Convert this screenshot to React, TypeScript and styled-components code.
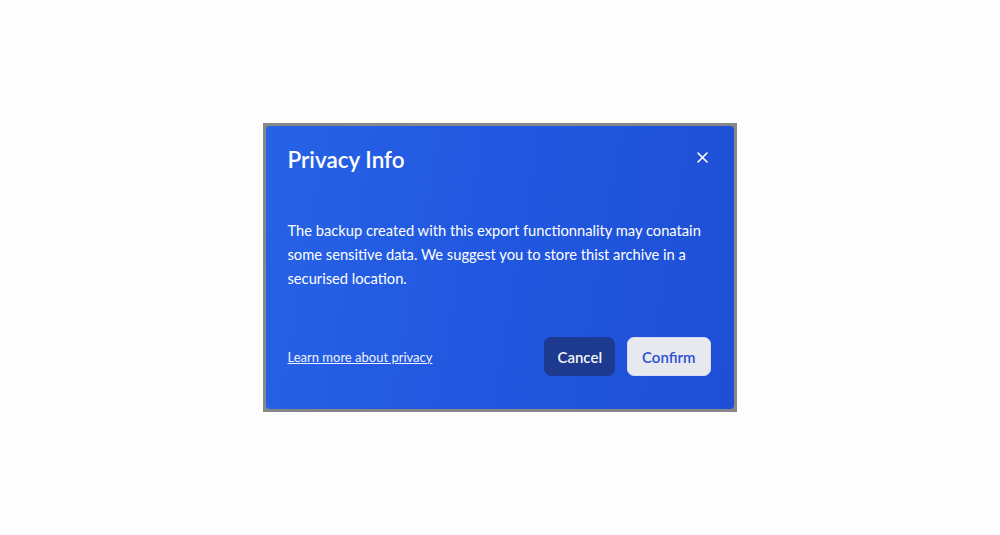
import * as React from "react";
import styled, { createGlobalStyle } from "styled-components";

const GlobalStyle = createGlobalStyle`
  html, body {
    margin: 0;
    padding: 0;
    background: #fdfdfd;
    font-family: Lato, "Noto Sans", "Liberation Sans", sans-serif;
  }
`;

const Page = styled.div`
  width: 1000px;
  height: 535px;
  display: flex;
  align-items: center;
  justify-content: center;
`;

const Frame = styled.div`
  background: #878787;
  padding: 3px;
  margin-left: -1px;
`;

const Card = styled.div`
  width: 468px;
  height: 283px;
  box-sizing: border-box;
  border-radius: 4px;
  background: linear-gradient(100deg, #2662e6 0%, #2157df 50%, #1e4fd6 100%);
  color: #fff;
  display: flex;
  flex-direction: column;
  padding: 19px 23px 33px 22px;
`;

const Header = styled.div`
  display: flex;
  align-items: center;
  justify-content: space-between;
  height: 28px;
`;

const Title = styled.h2`
  margin: 0;
  font-size: 22.5px;
  font-weight: 600;
`;

const CloseButton = styled.button`
  background: none;
  border: none;
  padding: 0;
  width: 16px;
  height: 16px;
  display: flex;
  align-items: center;
  justify-content: center;
  cursor: pointer;
  margin-top: -4px;
`;

const Body = styled.p`
  margin: 45px 0 0 0;
  font-size: 14.7px;
  line-height: 24px;
`;

const Footer = styled.div`
  margin-top: auto;
  display: flex;
  align-items: center;
  justify-content: space-between;
`;

const Link = styled.a`
  color: #eef1ff;
  font-size: 13px;
  text-decoration: underline;
  cursor: pointer;
`;

const Actions = styled.div`
  display: flex;
  gap: 12px;
`;

const ActionButton = styled.button<{ $primary?: boolean }>`
  height: 39px;
  padding: 0 ${(p) => (p.$primary ? "14px" : "12px")};
  border-radius: 7px;
  font-family: inherit;
  font-size: 15px;
  font-weight: 600;
  cursor: pointer;
  border: 1px solid ${(p) => (p.$primary ? "#d8dcf2" : "#1c3a95")};
  background: ${(p) => (p.$primary ? "#e8e9ef" : "#1d3a8e")};
  color: ${(p) => (p.$primary ? "#2a50d4" : "#f3f4f8")};
`;

export default function App() {
  return (
    <>
      <GlobalStyle />
      <Page>
        <Frame>
          <Card>
            <Header>
              <Title>Privacy Info</Title>
              <CloseButton aria-label="Close">
                <svg width="11" height="11" viewBox="0 0 11 11">
                  <path d="M1 1L10 10M10 1L1 10" stroke="#fff" strokeWidth="1.6" strokeLinecap="round" />
                </svg>
              </CloseButton>
            </Header>
            <Body>
              The backup created with this export functionnality may conatain
              some sensitive data. We suggest you to store thist archive in a
              securised location.
            </Body>
            <Footer>
              <Link>Learn more about privacy</Link>
              <Actions>
                <ActionButton>Cancel</ActionButton>
                <ActionButton $primary>Confirm</ActionButton>
              </Actions>
            </Footer>
          </Card>
        </Frame>
      </Page>
    </>
  );
}
